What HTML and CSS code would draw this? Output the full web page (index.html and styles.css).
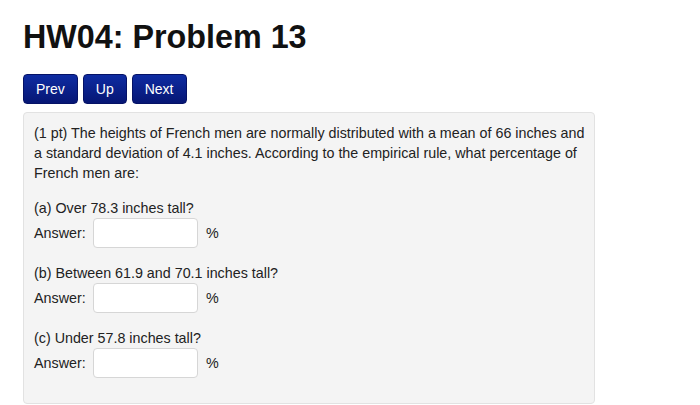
FILE: index.html
```html
<!DOCTYPE html>
<html lang="en">
<head>
<meta charset="utf-8">
<title>HW04: Problem 13</title>
<link rel="stylesheet" href="styles.css">
</head>
<body>
<div class="page">
  <h1 class="title">HW04: Problem 13</h1>
  <nav class="nav">
    <a class="btn" href="#">Prev</a>
    <a class="btn" href="#">Up</a>
    <a class="btn" href="#">Next</a>
  </nav>
  <div class="problem">
    <p class="intro">(1 pt) The heights of French men are normally distributed with a mean of 66 inches and a standard deviation of 4.1 inches. According to the empirical rule, what percentage of French men are:</p>
    <div class="part">
      <div class="question">(a) Over 78.3 inches tall?</div>
      <div class="answer-row"><span class="label">Answer:</span><input class="answer" type="text"><span class="unit">%</span></div>
    </div>
    <div class="part">
      <div class="question">(b) Between 61.9 and 70.1 inches tall?</div>
      <div class="answer-row"><span class="label">Answer:</span><input class="answer" type="text"><span class="unit">%</span></div>
    </div>
    <div class="part">
      <div class="question">(c) Under 57.8 inches tall?</div>
      <div class="answer-row"><span class="label">Answer:</span><input class="answer" type="text"><span class="unit">%</span></div>
    </div>
  </div>
</div>
</body>
</html>
```
FILE: styles.css
```css
html, body {
  margin: 0;
  padding: 0;
  background: #ffffff;
}
body {
  font-family: "Liberation Sans", Arial, sans-serif;
  color: #222;
}
.page {
  padding: 20px 23px 0 23px;
}
.title {
  margin: 0;
  font-size: 32.3px;
  line-height: 35px;
  font-weight: bold;
  color: #111;
}
.nav {
  display: flex;
  gap: 5px;
  margin-top: 19px;
}
.btn {
  display: flex;
  align-items: center;
  height: 30px;
  box-sizing: border-box;
  padding: 0 12px;
  font-size: 14px;
  color: #fff;
  text-decoration: none;
  background: linear-gradient(#0e2ca2, #061674);
  border: 1px solid #051266;
  border-radius: 4px;
}
.problem {
  margin-top: 8px;
  width: 572px;
  box-sizing: border-box;
  padding: 10px 5px 10px 10px;
  background: #f4f4f4;
  border: 1px solid #e2e2e2;
  border-radius: 4px;
  font-size: 14.3px;
  line-height: 20px;
  color: #222;
}
.intro {
  margin: 0;
}
.part {
  margin-top: 15px;
  margin-bottom: 15px;
}
.answer-row {
  display: flex;
  align-items: center;
  height: 30px;
}
.label {
  width: 59px;
}
.answer {
  width: 105px;
  height: 30px;
  box-sizing: border-box;
  margin: 0;
  background: #fff;
  border: 1px solid #d6d6d6;
  border-radius: 4px;
}
.unit {
  margin-left: 8px;
}
```
